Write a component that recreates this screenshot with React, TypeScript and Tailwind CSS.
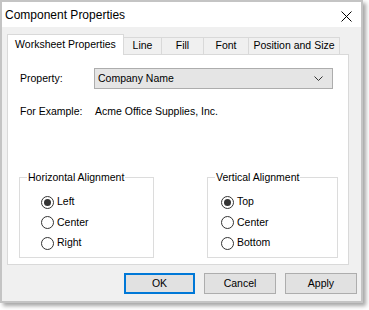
import React from "react";

const font = { fontFamily: '"Liberation Sans", Arial, sans-serif' };

function Radio({ label, checked }: { label: string; checked?: boolean }) {
  return (
    <div className="flex h-[20.5px] items-center">
      <span className="flex h-[13px] w-[13px] items-center justify-center rounded-full border border-[#333333] bg-white">
        {checked && <span className="h-[7px] w-[7px] rounded-full bg-[#333333]" />}
      </span>
      <span className="ml-[3px]">{label}</span>
    </div>
  );
}

function GroupBox({ title, width, indent, children }: { title: string; width: string; indent: string; children: React.ReactNode }) {
  return (
    <fieldset className={`${width} h-[87px] border border-[#dcdcdc]`}>
      <legend className="ml-[7px] px-[1px] leading-[13px]">{title}</legend>
      <div className={`${indent} pt-[8px]`}>{children}</div>
    </fieldset>
  );
}

export default function App() {
  const tabs = [
    { label: "Line", w: "w-[38px]" },
    { label: "Fill", w: "w-[42px]" },
    { label: "Font", w: "w-[45px]" },
    { label: "Position and Size", w: "w-[91px]" },
  ];

  return (
    <div className="h-[310px] w-[369px] bg-white text-[10.5px] text-black" style={font}>
      <div className="flex h-[303px] w-[363px] flex-col border-2 border-[#c4c4c4] bg-white shadow-[3px_3px_4px_rgba(0,0,0,0.35)]">
        <div className="flex h-[25px] shrink-0 items-center justify-between pl-[3px] pr-[9px]">
          <span className="text-[12px]">Component Properties</span>
          <svg width="11" height="11" viewBox="0 0 11 11" className="mt-[3px]">
            <path d="M0.5 0.5 L10.5 10.5 M10.5 0.5 L0.5 10.5" stroke="#000" strokeWidth="1" fill="none" />
          </svg>
        </div>

        <div className="flex flex-1 flex-col bg-[#f0f0f0] pl-[5px] pt-[7px]">
          <div className="flex h-[20px] items-end">
            <div className="relative z-10 -mb-px flex h-[21px] w-[117px] items-center justify-center border border-b-0 border-[#d9d9d9] bg-white pb-[1px]">
              Worksheet Properties
            </div>
            {tabs.map((t) => (
              <div key={t.label} className={`flex h-[17px] ${t.w} items-center justify-center border-r border-t border-[#d9d9d9] bg-[#f0f0f0]`}>
                {t.label}
              </div>
            ))}
          </div>

          <div className="flex h-[211px] w-[342px] flex-col border border-[#d9d9d9] bg-white pl-[12px] pt-[13px]">
            <div className="flex h-[21px] items-center">
              <span className="w-[74px]">Property:</span>
              <div className="flex h-[21px] w-[239px] items-center justify-between border border-[#adadad] bg-[#e5e5e5] pl-[3px] pr-[9px]">
                <span>Company Name</span>
                <svg width="9" height="5" viewBox="0 0 9 5">
                  <path d="M0.5 0.5 L4.5 4.5 L8.5 0.5" stroke="#333" strokeWidth="1" fill="none" />
                </svg>
              </div>
            </div>
            <div className="mt-[16px] flex h-[14px] items-center">
              <span className="w-[75px]">For Example:</span>
              <span>Acme Office Supplies, Inc.</span>
            </div>

            <div className="ml-[-1px] mt-[52px] flex gap-[53px]">
              <GroupBox title="Horizontal Alignment" width="w-[135px]" indent="pl-[21px]">
                <Radio label="Left" checked />
                <Radio label="Center" />
                <Radio label="Right" />
              </GroupBox>
              <GroupBox title="Vertical Alignment" width="w-[131px]" indent="pl-[13px]">
                <Radio label="Top" checked />
                <Radio label="Center" />
                <Radio label="Bottom" />
              </GroupBox>
            </div>
          </div>

          <div className="mt-[8px] flex justify-end gap-[9px] pr-[4px]">
            <button className="flex h-[21px] w-[71px] items-center justify-center border-2 border-[#0078d7] bg-[#e1e1e1]">OK</button>
            <button className="flex h-[21px] w-[72px] items-center justify-center border border-[#adadad] bg-[#e1e1e1]">Cancel</button>
            <button className="flex h-[21px] w-[72px] items-center justify-center border border-[#adadad] bg-[#e1e1e1]">Apply</button>
          </div>
        </div>
      </div>
    </div>
  );
}
